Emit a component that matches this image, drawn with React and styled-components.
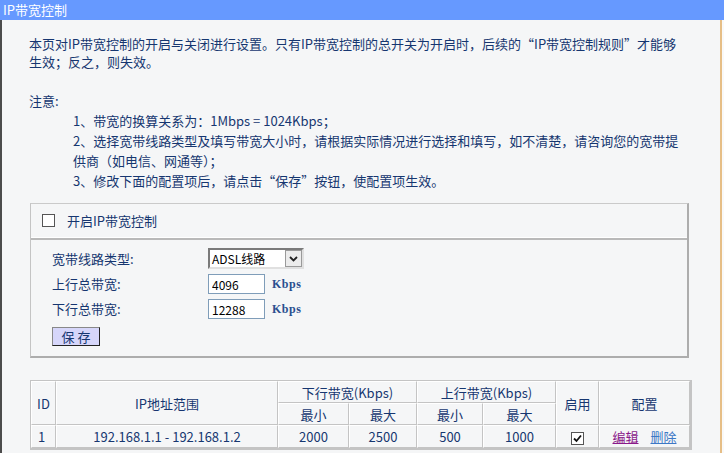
import React from 'react'
import styled, { createGlobalStyle } from 'styled-components'

const GlobalStyle = createGlobalStyle`
    html, body {
        margin: 0;
        padding: 0;
        background: #f9f9f9;
    }
    body {
        font-family: "Noto Sans CJK SC", "Noto Sans", sans-serif;
        font-size: 13px;
        color: #163670;
    }
`

const rules = [
    { id: 1, range: '192.168.1.1 - 192.168.1.2', downMin: 2000, downMax: 2500, upMin: 500, upMax: 1000, on: true },
]

function CheckMark({ checked }) {
    return (
        <Check>
            {checked && (
                <svg width='9' height='9' viewBox='0 0 9 9'>
                    <polyline points='1,4.5 3.5,7 8,1.5' fill='none' stroke='#111' strokeWidth='1.8' />
                </svg>
            )}
        </Check>
    )
}

function App() {
    return (
        <Page>
            <GlobalStyle />
            <TitleBar>IP带宽控制</TitleBar>
            <Frame>
                <Content>
                    <Intro>
                        本页对IP带宽控制的开启与关闭进行设置。只有IP带宽控制的总开关为开启时，后续的“IP带宽控制规则”才能够<br />
                        生效；反之，则失效。
                    </Intro>

                    <NoteTitle>注意:</NoteTitle>
                    <Notes>
                        <li>1、带宽的换算关系为：1Mbps = 1024Kbps；</li>
                        <li>2、选择宽带线路类型及填写带宽大小时，请根据实际情况进行选择和填写，如不清楚，请咨询您的宽带提<br />供商（如电信、网通等）；</li>
                        <li>3、修改下面的配置项后，请点击“保存”按钮，使配置项生效。</li>
                    </Notes>

                    <Panel>
                        <PanelHead>
                            <CheckMark checked={false} />
                            <span>开启IP带宽控制</span>
                        </PanelHead>
                        <PanelBody>
                            <Label>宽带线路类型:</Label>
                            <Select>
                                <span>ADSL线路</span>
                                <SelectArrow>
                                    <svg width='9' height='6' viewBox='0 0 9 6'>
                                        <polyline points='1,1 4.5,4.5 8,1' fill='none' stroke='#222' strokeWidth='1.8' />
                                    </svg>
                                </SelectArrow>
                            </Select>

                            <Label>上行总带宽:</Label>
                            <Field>
                                <Input defaultValue='4096' />
                                <Unit>Kbps</Unit>
                            </Field>

                            <Label>下行总带宽:</Label>
                            <Field>
                                <Input defaultValue='12288' />
                                <Unit>Kbps</Unit>
                            </Field>

                            <SaveButton type='button'>保 存</SaveButton>
                        </PanelBody>
                    </Panel>

                    <Table>
                        <colgroup>
                            <col style={{ width: 25 }} />
                            <col style={{ width: 222 }} />
                            <col style={{ width: 71 }} />
                            <col style={{ width: 68 }} />
                            <col style={{ width: 66 }} />
                            <col style={{ width: 73 }} />
                            <col style={{ width: 43 }} />
                            <col style={{ width: 91 }} />
                        </colgroup>
                        <thead>
                            <tr>
                                <Th rowSpan={2}>ID</Th>
                                <Th rowSpan={2}>IP地址范围</Th>
                                <Th colSpan={2}>下行带宽(Kbps)</Th>
                                <Th colSpan={2}>上行带宽(Kbps)</Th>
                                <Th rowSpan={2}>启用</Th>
                                <Th rowSpan={2}>配置</Th>
                            </tr>
                            <tr>
                                <Th>最小</Th>
                                <Th>最大</Th>
                                <Th>最小</Th>
                                <Th>最大</Th>
                            </tr>
                        </thead>
                        <tbody>
                            {rules.map(r => (
                                <tr key={r.id}>
                                    <Td $left>{r.id}</Td>
                                    <Td>{r.range}</Td>
                                    <Td>{r.downMin}</Td>
                                    <Td>{r.downMax}</Td>
                                    <Td>{r.upMin}</Td>
                                    <Td>{r.upMax}</Td>
                                    <Td><CheckMark checked={r.on} /></Td>
                                    <Td>
                                        <Link href='#' $visited>编辑</Link>
                                        <Link href='#'>删除</Link>
                                    </Td>
                                </tr>
                            ))}
                        </tbody>
                    </Table>
                </Content>
            </Frame>
        </Page>
    )
}

const Page = styled.div`
    width: 724px;
    height: 453px;
    overflow: hidden;
    display: flex;
    flex-direction: column;
`

const TitleBar = styled.div`
    height: 20px;
    line-height: 20px;
    background: #6699ff;
    color: #fff;
    font-size: 13px;
    padding-left: 3px;
`

const Frame = styled.div`
    flex: 1;
    width: 718px;
    border-left: 2px solid #4c4c4c;
    border-right: 2px solid #e6be86;
    background: #f5f6f7;
`

const Content = styled.div`
    padding: 15px 0 0 27px;
`

const Intro = styled.p`
    margin: 0;
    line-height: 18px;
    white-space: nowrap;
`

const NoteTitle = styled.div`
    margin-top: 20px;
    line-height: 20px;
`

const Notes = styled.ul`
    list-style: none;
    margin: 0;
    padding: 0 0 0 44px;
    line-height: 20px;
    white-space: nowrap;
`

const Panel = styled.div`
    margin: 12px 0 0 1px;
    width: 656px;
    border-top: 1px solid #cacaca;
    border-left: 1px solid #c4c4c4;
    border-right: 2px solid #adadad;
    border-bottom: 2px solid #adadad;
`

const PanelHead = styled.div`
    height: 33px;
    display: flex;
    align-items: center;
    gap: 12px;
    padding-left: 11px;
    border-bottom: 1px solid #fff;
`

const PanelBody = styled.div`
    border-top: 2px solid #b9b9b9;
    padding: 8px 0 10px 21px;
    display: grid;
    grid-template-columns: 156px auto;
    row-gap: 5px;
    align-items: center;
    justify-items: start;
`

const Label = styled.span`
    line-height: 20px;
`

const Select = styled.div`
    width: 92px;
    height: 17px;
    display: flex;
    align-items: center;
    justify-content: space-between;
    background: #fff;
    color: #000;
    font-size: 12px;
    border: 2px solid;
    border-color: #7a7a7a #e0e0e0 #e0e0e0 #7a7a7a;
    span {
        padding-left: 2px;
    }
`

const SelectArrow = styled.div`
    width: 17px;
    height: 17px;
    display: flex;
    align-items: center;
    justify-content: center;
    background: #ececec;
    border: 1px solid #9a9a9a;
    box-sizing: border-box;
`

const Field = styled.div`
    display: flex;
    align-items: center;
    gap: 7px;
`

const Input = styled.input`
    width: 57px;
    height: 20px;
    box-sizing: border-box;
    border: 1px solid #7f9db9;
    padding: 0 3px;
    font: 12px "Noto Sans CJK SC", sans-serif;
    color: #000;
    background: #fff;
    outline: none;
`

const Unit = styled.span`
    font-family: "Liberation Serif", serif;
    font-weight: bold;
    font-size: 12px;
    color: #2a4f8f;
    letter-spacing: 0.5px;
`

const SaveButton = styled.button`
    grid-column: 1;
    margin-top: 3px;
    width: 48px;
    height: 19px;
    padding: 0;
    font: 13px "Noto Sans CJK SC", sans-serif;
    line-height: 15px;
    color: #163670;
    background: #d6d6fa;
    border: 1px solid;
    border-color: #888 #222 #222 #888;
`

const Check = styled.span`
    width: 13px;
    height: 13px;
    box-sizing: border-box;
    display: inline-flex;
    align-items: center;
    justify-content: center;
    vertical-align: middle;
    background: #fff;
    border: 1px solid #555;
`

const Table = styled.table`
    margin: 22px 0 0 1px;
    width: 659px;
    table-layout: fixed;
    border-collapse: separate;
    border-spacing: 0;
    border: 1px solid #c4c4c4;
    border-right-width: 2px;
    border-bottom-width: 2px;
    font-size: 13px;
`

const Th = styled.th`
    font-weight: normal;
    height: 20px;
    padding: 0;
    border-top: 1px solid #fff;
    border-left: 1px solid #fff;
    border-right: 1px solid #c4c4c4;
    border-bottom: 1px solid #c4c4c4;
    text-align: center;
    white-space: nowrap;
`

const Td = styled.td`
    height: 21px;
    padding: ${p => (p.$left ? '0 0 0 6px' : '0')};
    border-top: 1px solid #fff;
    border-left: 1px solid #fff;
    border-right: 1px solid #c4c4c4;
    border-bottom: 1px solid #c4c4c4;
    text-align: ${p => (p.$left ? 'left' : 'center')};
    white-space: nowrap;
`

const Link = styled.a`
    color: ${p => (p.$visited ? '#8a1a8a' : '#3d78c6')};
    text-decoration: underline;
    margin: 0 6px;
`

export default App
